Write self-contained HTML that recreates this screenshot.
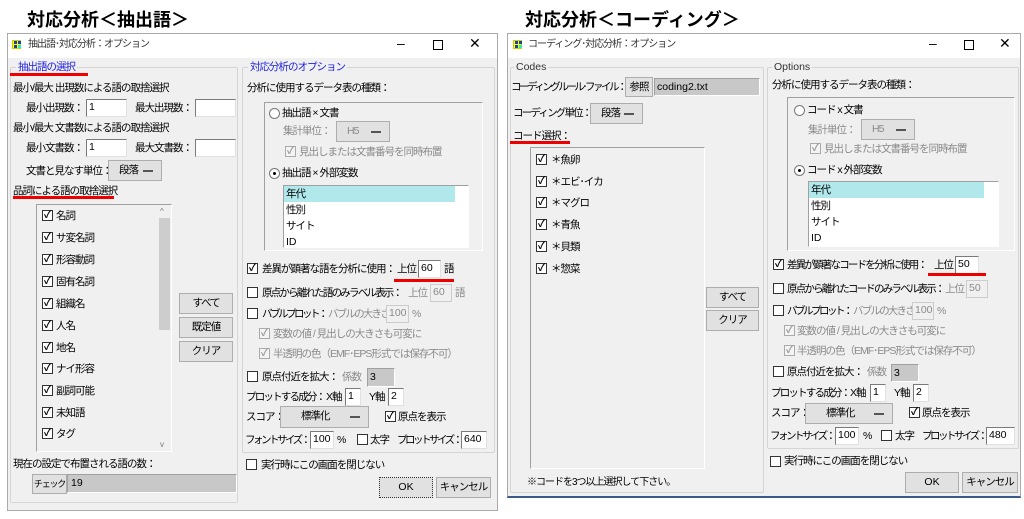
<!DOCTYPE html><html><head><meta charset="utf-8"><style>
body{margin:0;width:1024px;height:519px;background:#fff;position:relative;overflow:hidden;font-family:"Liberation Sans","Noto Sans CJK JP",sans-serif;font-size:10.5px;letter-spacing:-1px;color:#000}
div{position:absolute;box-sizing:border-box;white-space:nowrap}
.t{white-space:nowrap;line-height:14px}
.k{letter-spacing:-2.5px}
.k2{letter-spacing:-1.8px}
.g{color:#8a8a8a}
.dlg{background:#f0f0f0;border:1px solid #aaa}
.tb{background:#fff;left:0;right:0;top:0;height:24px}
.grp{border:1px solid #d5d5d5;border-radius:2px}
.lbl{background:#f0f0f0;padding:0 2px;line-height:12px}
.in{background:#fff;border:1px solid #7a7a7a;border-right-color:#e0e0e0;border-bottom-color:#e0e0e0;line-height:15px;padding-left:2px;letter-spacing:0}
.ing{background:#f0f0f0;border:1px solid #ccc;color:#8a8a8a;line-height:15px;padding-left:2px;letter-spacing:0}
.btn{background:#e1e1e1;border:1px solid #adadad;text-align:center;line-height:18px}
.dd{background:#e1e1e1;border:1px solid #adadad;line-height:18px;padding-left:10px}
.dd:after{content:"";position:absolute;right:8px;top:9px;width:10px;height:2px;background:#555}
.cb{width:11px;height:11px;border:1px solid #333;background:#fff;font-size:10px;line-height:9px;text-align:center;font-weight:bold;letter-spacing:0}
.cbg{border-color:#aaa;color:#999;background:#f4f4f4}
.rb{width:11px;height:11px;border:1px solid #777;border-radius:50%;background:#fff}
.rb.on:after{content:"";position:absolute;left:3px;top:3px;width:3px;height:3px;border-radius:50%;background:#000}
.sunk{border:1px solid #a0a0a0;border-right-color:#fff;border-bottom-color:#fff}
.red{background:#e00;height:3px}
h1{position:absolute;margin:0;font-size:18px;font-weight:bold;white-space:nowrap;letter-spacing:0}
</style></head><body>
<h1 style="left:27px;top:6px">対応分析＜抽出語＞</h1>
<h1 style="left:525px;top:6px">対応分析＜コーディング＞</h1>

<!-- LEFT DIALOG -->
<div class="dlg" style="left:7px;top:33px;width:491px;height:478px">
 <div class="tb"></div>
</div>
<div style="left:12px;top:40px;width:9px;height:9px;background:#ff0;border:1px solid #cc0"></div>
<div style="left:14px;top:41px;width:3px;height:3px;background:#1a3fb0"></div><div style="left:18px;top:41px;width:3px;height:3px;background:#1a3fb0"></div>
<div style="left:14px;top:45px;width:3px;height:3px;background:#1a3fb0"></div><div style="left:18px;top:45px;width:3px;height:3px;background:#2ec"></div>
<div class="t" style="left:28px;top:38px;font-size:10px;color:#333">抽出語･対応分析：オプション</div>
<div class="t" style="left:397px;top:36px;font-size:14px">–</div>
<div style="left:433px;top:40px;width:10px;height:10px;border:1px solid #000"></div>
<div class="t" style="left:469px;top:36px;font-size:14px">✕</div>

<div class="grp" style="left:10px;top:67px;width:228px;height:436px"></div>
<div class="t lbl" style="left:16px;top:61px;color:#2020e0">抽出語の選択</div>
<div class="red" style="left:10px;top:73px;width:78px"></div>
<div class="t" style="left:13px;top:81px">最小/最大 出現数による語の取捨選択</div>
<div class="t" style="left:26px;top:101px">最小出現数：</div><div class="in" style="left:86px;top:99px;width:41px;height:18px">1</div>
<div class="t" style="left:135px;top:101px">最大出現数：</div><div class="in" style="left:195px;top:99px;width:41px;height:18px"></div>
<div class="t" style="left:13px;top:121px">最小/最大 文書数による語の取捨選択</div>
<div class="t" style="left:26px;top:141px">最小文書数：</div><div class="in" style="left:86px;top:139px;width:41px;height:18px">1</div>
<div class="t" style="left:135px;top:141px">最大文書数：</div><div class="in" style="left:195px;top:139px;width:41px;height:18px"></div>
<div class="t" style="left:26px;top:164px">文書と見なす単位：</div><div class="dd" style="left:108px;top:160px;width:54px;height:21px">段落</div>
<div class="t" style="left:13px;top:184px">品詞による語の取捨選択</div>
<div class="red" style="left:13px;top:196px;width:101px"></div>
<div class="sunk" style="left:36px;top:204px;width:136px;height:248px;background:#f0f0f0"></div>
<div style="left:158px;top:206px;width:13px;height:245px;background:#f0f0f0"></div>
<div style="left:159px;top:218px;width:11px;height:112px;background:#cdcdcd"></div>
<div class="t" style="left:160px;top:205px;font-size:8px;color:#777">^</div>
<div class="t" style="left:160px;top:438px;font-size:8px;color:#777">v</div>
<div class="cb" style="left:42px;top:210px">✓</div><div class="t" style="left:56px;top:209px">名詞</div>
<div class="cb" style="left:42px;top:232px">✓</div><div class="t" style="left:56px;top:231px">サ変名詞</div>
<div class="cb" style="left:42px;top:254px">✓</div><div class="t" style="left:56px;top:253px">形容動詞</div>
<div class="cb" style="left:42px;top:276px">✓</div><div class="t" style="left:56px;top:275px">固有名詞</div>
<div class="cb" style="left:42px;top:298px">✓</div><div class="t" style="left:56px;top:297px">組織名</div>
<div class="cb" style="left:42px;top:320px">✓</div><div class="t" style="left:56px;top:319px">人名</div>
<div class="cb" style="left:42px;top:342px">✓</div><div class="t" style="left:56px;top:341px">地名</div>
<div class="cb" style="left:42px;top:363px">✓</div><div class="t" style="left:56px;top:362px">ナイ形容</div>
<div class="cb" style="left:42px;top:385px">✓</div><div class="t" style="left:56px;top:384px">副詞可能</div>
<div class="cb" style="left:42px;top:407px">✓</div><div class="t" style="left:56px;top:406px">未知語</div>
<div class="cb" style="left:42px;top:428px">✓</div><div class="t" style="left:56px;top:427px">タグ</div>
<div class="btn" style="left:179px;top:293px;width:54px;height:21px">すべて</div>
<div class="btn" style="left:179px;top:317px;width:54px;height:21px">既定値</div>
<div class="btn" style="left:179px;top:341px;width:54px;height:21px">クリア</div>
<div class="t" style="left:13px;top:457px">現在の設定で布置される語の数：</div>
<div class="btn" style="left:32px;top:474px;width:35px;height:20px;font-size:9px;letter-spacing:-1.2px">チェック</div>
<div class="sunk" style="left:67px;top:474px;width:170px;height:19px;background:#c8c8c8;line-height:17px;padding-left:3px;letter-spacing:0">19</div>

<div class="grp" style="left:242px;top:67px;width:253px;height:386px"></div>
<div class="t lbl" style="left:248px;top:61px;color:#2020e0">対応分析のオプション</div>
<div class="t" style="left:247px;top:81px">分析に使用するデータ表の種類：</div>
<div class="sunk" style="left:264px;top:102px;width:219px;height:149px"></div>
<div class="rb" style="left:269px;top:108px"></div><div class="t" style="left:282px;top:106px">抽出語 × 文書</div>
<div class="t g" style="left:283px;top:124px">集計単位：</div><div class="dd g" style="left:336px;top:121px;width:54px;height:21px">H5</div>
<div class="cb cbg" style="left:285px;top:146px">✓</div><div class="t g" style="left:299px;top:145px">見出しまたは文書番号を同時布置</div>
<div class="rb on" style="left:269px;top:168px"></div><div class="t" style="left:282px;top:166px">抽出語 × 外部変数</div>
<div class="sunk" style="left:283px;top:185px;width:186px;height:63px;background:#fff"></div>
<div style="left:284px;top:186px;width:171px;height:16px;background:#b0e8ec"></div>
<div class="t" style="left:286px;top:187px">年代</div><div class="t" style="left:286px;top:203px">性別</div><div class="t" style="left:286px;top:219px">サイト</div><div class="t" style="left:286px;top:235px;letter-spacing:0">ID</div>
<div class="cb" style="left:247px;top:263px">✓</div><div class="t" style="left:262px;top:262px">差異が顕著な語を分析に使用：</div>
<div class="t" style="left:397px;top:262px">上位</div><div class="in" style="left:418px;top:260px;width:23px;height:18px">60</div><div class="t" style="left:444px;top:262px">語</div>
<div class="red" style="left:394px;top:279px;width:60px"></div>
<div class="cb" style="left:247px;top:287px"></div><div class="t k2" style="left:262px;top:286px">原点から離れた語のみラベル表示：</div>
<div class="t g" style="left:408px;top:286px">上位</div><div class="ing" style="left:430px;top:284px;width:22px;height:18px">60</div><div class="t g" style="left:455px;top:286px">語</div>
<div class="cb" style="left:247px;top:308px"></div><div class="t k" style="left:262px;top:307px">バブルプロット：</div>
<div class="t g k2" style="left:328px;top:307px">バブルの大きさ</div><div class="ing" style="left:386px;top:305px;width:23px;height:18px">100</div><div class="t g" style="left:412px;top:307px">%</div>
<div class="cb cbg" style="left:259px;top:328px">✓</div><div class="t g" style="left:273px;top:327px">変数の値 / 見出しの大きさも可変に</div>
<div class="cb cbg" style="left:259px;top:348px">✓</div><div class="t g" style="left:273px;top:347px">半透明の色（EMF･EPS形式では保存不可）</div>
<div class="cb" style="left:247px;top:371px"></div><div class="t" style="left:262px;top:370px">原点付近を拡大：</div>
<div class="t g" style="left:342px;top:370px">係数</div><div class="sunk" style="left:367px;top:368px;width:28px;height:19px;background:#c8c8c8;line-height:17px;padding-left:2px">3</div>
<div class="t k2" style="left:246px;top:390px">プロットする成分：</div>
<div class="t" style="left:326px;top:390px">X軸</div><div class="in" style="left:345px;top:388px;width:16px;height:18px">1</div>
<div class="t" style="left:369px;top:390px">Y軸</div><div class="in" style="left:388px;top:388px;width:16px;height:18px">2</div>
<div class="t" style="left:246px;top:410px">スコア：</div><div class="dd" style="left:280px;top:406px;width:89px;height:22px;padding-left:20px">標準化</div>
<div class="cb" style="left:385px;top:411px">✓</div><div class="t" style="left:398px;top:410px">原点を表示</div>
<div class="t k" style="left:245px;top:433px">フォントサイズ：</div><div class="in" style="left:310px;top:431px;width:24px;height:18px">100</div>
<div class="t" style="left:337px;top:433px">%</div><div class="cb" style="left:357px;top:434px"></div><div class="t" style="left:370px;top:433px">太字</div>
<div class="t k" style="left:397px;top:433px">プロットサイズ：</div><div class="in" style="left:461px;top:431px;width:26px;height:18px">640</div>
<div class="cb" style="left:246px;top:459px"></div><div class="t" style="left:261px;top:458px">実行時にこの画面を閉じない</div>
<div class="btn" style="left:379px;top:477px;width:54px;height:21px;border:1px dotted #333;letter-spacing:0">OK</div>
<div class="btn" style="left:436px;top:477px;width:55px;height:21px">キャンセル</div>

<!-- RIGHT DIALOG -->
<div class="dlg" style="left:507px;top:33px;width:514px;height:465px;border-bottom:2px solid #3a5a8a">
 <div class="tb"></div>
</div>
<div style="left:513px;top:40px;width:9px;height:9px;background:#ff0;border:1px solid #cc0"></div>
<div style="left:515px;top:41px;width:3px;height:3px;background:#1a3fb0"></div><div style="left:519px;top:41px;width:3px;height:3px;background:#1a3fb0"></div>
<div style="left:515px;top:45px;width:3px;height:3px;background:#1a3fb0"></div><div style="left:519px;top:45px;width:3px;height:3px;background:#2ec"></div>
<div class="t" style="left:528px;top:38px;font-size:10px;color:#333">コーディング･対応分析：オプション</div>
<div class="t" style="left:929px;top:36px;font-size:14px">–</div>
<div style="left:964px;top:40px;width:10px;height:10px;border:1px solid #000"></div>
<div class="t" style="left:999px;top:36px;font-size:14px">✕</div>

<div class="grp" style="left:510px;top:67px;width:254px;height:426px"></div>
<div class="t lbl" style="left:514px;top:61px;color:#333;letter-spacing:0">Codes</div>
<div class="t k" style="left:511px;top:80px">コーディングルール･ファイル：</div>
<div class="btn" style="left:625px;top:77px;width:28px;height:20px">参照</div>
<div class="sunk" style="left:654px;top:78px;width:106px;height:18px;background:#c8c8c8;line-height:16px;padding-left:2px;letter-spacing:0">coding2.txt</div>
<div class="t k2" style="left:513px;top:106px">コーディング単位：</div><div class="dd" style="left:590px;top:103px;width:53px;height:21px">段落</div>
<div class="t" style="left:513px;top:129px">コード選択：</div>
<div class="red" style="left:510px;top:141px;width:60px"></div>
<div class="sunk" style="left:530px;top:147px;width:175px;height:322px"></div>
<div class="cb" style="left:536px;top:154px">✓</div><div class="t" style="left:551px;top:153px">＊魚卵</div>
<div class="cb" style="left:536px;top:176px">✓</div><div class="t" style="left:551px;top:175px">＊エビ･イカ</div>
<div class="cb" style="left:536px;top:197px">✓</div><div class="t" style="left:551px;top:196px">＊マグロ</div>
<div class="cb" style="left:536px;top:219px">✓</div><div class="t" style="left:551px;top:218px">＊青魚</div>
<div class="cb" style="left:536px;top:241px">✓</div><div class="t" style="left:551px;top:240px">＊貝類</div>
<div class="cb" style="left:536px;top:263px">✓</div><div class="t" style="left:551px;top:262px">＊惣菜</div>
<div class="btn" style="left:706px;top:287px;width:53px;height:21px">すべて</div>
<div class="btn" style="left:706px;top:310px;width:53px;height:21px">クリア</div>
<div class="t" style="left:527px;top:476px;font-size:10px">※コードを3つ以上選択して下さい。</div>

<div class="grp" style="left:767px;top:67px;width:252px;height:382px"></div>
<div class="t lbl" style="left:772px;top:61px;color:#333;letter-spacing:0">Options</div>
<div class="t" style="left:772px;top:78px">分析に使用するデータ表の種類：</div>
<div class="sunk" style="left:787px;top:97px;width:228px;height:154px"></div>
<div class="rb" style="left:794px;top:105px"></div><div class="t" style="left:807px;top:103px">コード x 文書</div>
<div class="t g" style="left:808px;top:123px">集計単位：</div><div class="dd g" style="left:861px;top:119px;width:54px;height:21px">H5</div>
<div class="cb cbg" style="left:810px;top:143px">✓</div><div class="t g" style="left:824px;top:142px">見出しまたは文書番号を同時布置</div>
<div class="rb on" style="left:794px;top:165px"></div><div class="t" style="left:807px;top:163px">コード x 外部変数</div>
<div class="sunk" style="left:808px;top:181px;width:191px;height:66px;background:#fff"></div>
<div style="left:809px;top:182px;width:175px;height:16px;background:#b0e8ec"></div>
<div class="t" style="left:811px;top:183px">年代</div><div class="t" style="left:811px;top:199px">性別</div><div class="t" style="left:811px;top:215px">サイト</div><div class="t" style="left:811px;top:231px;letter-spacing:0">ID</div>
<div class="cb" style="left:773px;top:259px">✓</div><div class="t k2" style="left:787px;top:258px">差異が顕著なコードを分析に使用：</div>
<div class="t" style="left:934px;top:258px">上位</div><div class="in" style="left:955px;top:256px;width:24px;height:18px">50</div>
<div class="red" style="left:928px;top:273px;width:58px"></div>
<div class="cb" style="left:773px;top:283px"></div><div class="t k2" style="left:787px;top:282px">原点から離れたコードのみラベル表示：</div>
<div class="t g" style="left:945px;top:282px">上位</div><div class="ing" style="left:966px;top:280px;width:22px;height:18px">50</div>
<div class="cb" style="left:773px;top:305px"></div><div class="t k" style="left:787px;top:304px">バブルプロット：</div>
<div class="t g k2" style="left:853px;top:304px">バブルの大きさ</div><div class="ing" style="left:912px;top:302px;width:22px;height:18px">100</div><div class="t g" style="left:937px;top:304px">%</div>
<div class="cb cbg" style="left:784px;top:325px">✓</div><div class="t g" style="left:797px;top:324px">変数の値 / 見出しの大きさも可変に</div>
<div class="cb cbg" style="left:784px;top:345px">✓</div><div class="t g" style="left:797px;top:344px">半透明の色（EMF･EPS形式では保存不可）</div>
<div class="cb" style="left:773px;top:366px"></div><div class="t" style="left:787px;top:365px">原点付近を拡大：</div>
<div class="t g" style="left:867px;top:365px">係数</div><div class="sunk" style="left:891px;top:364px;width:28px;height:18px;background:#c8c8c8;line-height:16px;padding-left:2px">3</div>
<div class="t k2" style="left:771px;top:386px">プロットする成分：</div>
<div class="t" style="left:850px;top:386px">X軸</div><div class="in" style="left:870px;top:384px;width:16px;height:18px">1</div>
<div class="t" style="left:894px;top:386px">Y軸</div><div class="in" style="left:913px;top:384px;width:16px;height:18px">2</div>
<div class="t" style="left:771px;top:406px">スコア：</div><div class="dd" style="left:805px;top:403px;width:88px;height:21px;padding-left:20px">標準化</div>
<div class="cb" style="left:909px;top:407px">✓</div><div class="t" style="left:922px;top:406px">原点を表示</div>
<div class="t k" style="left:770px;top:429px">フォントサイズ：</div><div class="in" style="left:835px;top:427px;width:24px;height:18px">100</div>
<div class="t" style="left:863px;top:429px">%</div><div class="cb" style="left:881px;top:430px"></div><div class="t" style="left:895px;top:429px">太字</div>
<div class="t k" style="left:922px;top:429px">プロットサイズ：</div><div class="in" style="left:986px;top:427px;width:29px;height:18px">480</div>
<div class="cb" style="left:770px;top:456px"></div><div class="t" style="left:784px;top:454px">実行時にこの画面を閉じない</div>
<div class="btn" style="left:905px;top:472px;width:54px;height:21px;letter-spacing:0">OK</div>
<div class="btn" style="left:962px;top:472px;width:56px;height:21px">キャンセル</div>
</body></html>
